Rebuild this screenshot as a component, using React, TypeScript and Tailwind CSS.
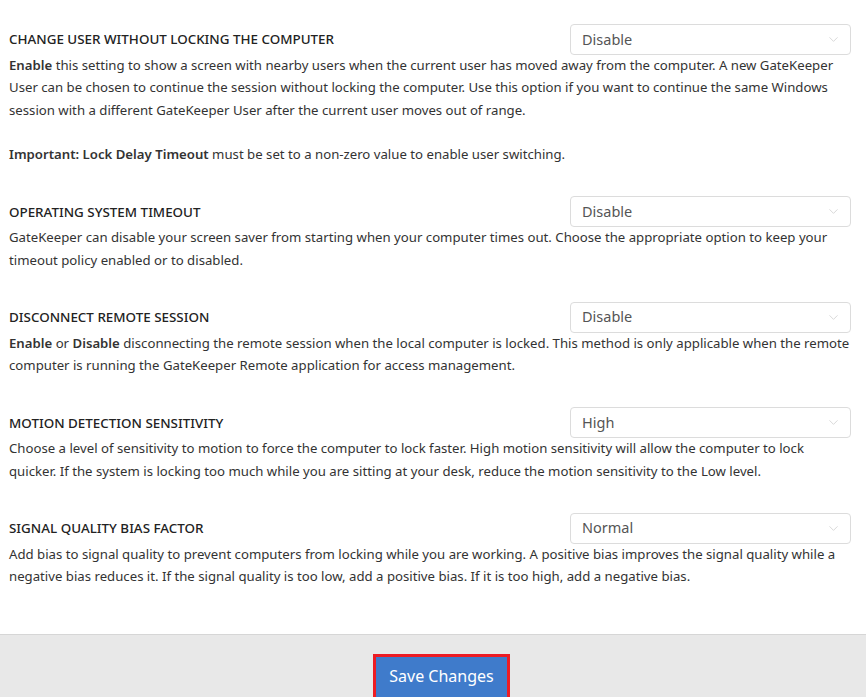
import { ChevronDown } from 'lucide-react';

type Setting = {
  title: string;
  value: string;
  body: React.ReactNode;
};

const settings: Setting[] = [
  {
    title: 'CHANGE USER WITHOUT LOCKING THE COMPUTER',
    value: 'Disable',
    body: (
      <>
        <b className="font-semibold">Enable</b> this setting to show a screen with nearby users when the current user has moved away from the computer. A new GateKeeper User can be chosen to continue the session without locking the computer. Use this option if you want to continue the same Windows session with a different GateKeeper User after the current user moves out of range.
        <br />
        <br />
        <b className="font-semibold">Important: Lock Delay Timeout</b> must be set to a non-zero value to enable user switching.
      </>
    ),
  },
  {
    title: 'OPERATING SYSTEM TIMEOUT',
    value: 'Disable',
    body: 'GateKeeper can disable your screen saver from starting when your computer times out. Choose the appropriate option to keep your timeout policy enabled or to disabled.',
  },
  {
    title: 'DISCONNECT REMOTE SESSION',
    value: 'Disable',
    body: (
      <>
        <b className="font-semibold">Enable</b> or <b className="font-semibold">Disable</b> disconnecting the remote session when the local computer is locked. This method is only applicable when the remote computer is running the GateKeeper Remote application for access management.
      </>
    ),
  },
  {
    title: 'MOTION DETECTION SENSITIVITY',
    value: 'High',
    body: 'Choose a level of sensitivity to motion to force the computer to lock faster. High motion sensitivity will allow the computer to lock quicker. If the system is locking too much while you are sitting at your desk, reduce the motion sensitivity to the Low level.',
  },
  {
    title: 'SIGNAL QUALITY BIAS FACTOR',
    value: 'Normal',
    body: 'Add bias to signal quality to prevent computers from locking while you are working. A positive bias improves the signal quality while a negative bias reduces it. If the signal quality is too low, add a positive bias. If it is too high, add a negative bias.',
  },
];

const SettingRow = ({ title, value, body }: Setting) => (
  <section>
    <div className="flex items-center justify-between">
      <h3 className="text-[13.4px] font-medium text-[#222]">{title}</h3>
      <div className="w-[281px] h-[31px] border border-[#dcdcdc] rounded-[4px] bg-white flex items-center justify-between pl-[11px] pr-[9px]">
        <span className="text-[14.5px] text-[#555]">{value}</span>
        <ChevronDown className="w-[15px] h-[15px] text-[#c8c8c8]" strokeWidth={1.1} />
      </div>
    </div>
    <p className="text-[13.2px] leading-[22.25px] text-[#333] -mt-[1px]">{body}</p>
  </section>
);

export default function App() {
  return (
    <div className="w-[866px] h-[697px] overflow-hidden bg-white flex flex-col font-['Noto_Sans','Open_Sans',sans-serif]">
      <div className="pl-[9px] pr-[15px] pt-[24px] flex flex-col gap-[31px] h-[634px] shrink-0">
        {settings.map(s => (
          <SettingRow key={s.title} {...s} />
        ))}
      </div>
      <div className="flex-1 border-t border-[#d6d6d6] bg-[#e8e8e8] flex justify-center pt-[19px] pl-[17px]">
        <button className="h-[50px] shrink-0 px-[13px] pb-[6px] border-[3px] border-[#ed1c24] bg-[#3f7bcb] text-white text-[16px] self-start">
          Save Changes
        </button>
      </div>
    </div>
  );
}
